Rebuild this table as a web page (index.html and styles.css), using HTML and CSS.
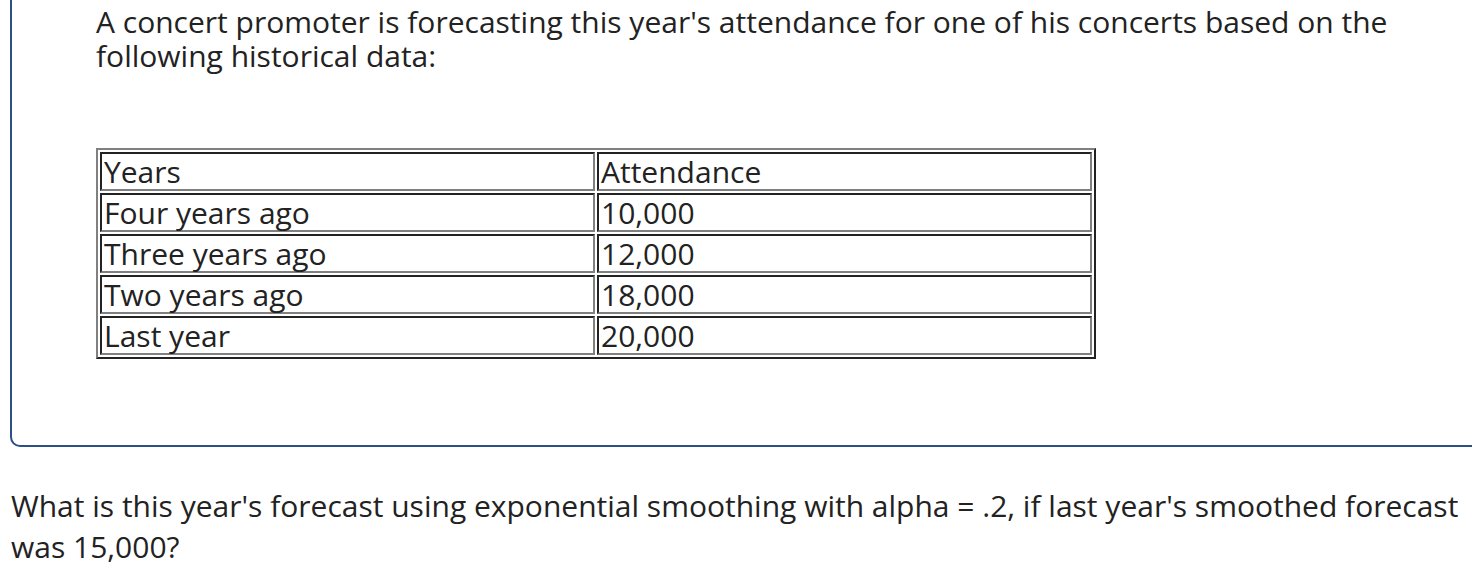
FILE: index.html
```html
<!DOCTYPE html>
<html>
<head>
<meta charset="utf-8">
<link rel="stylesheet" href="styles.css">
</head>
<body>
<div class="panel">
  <p class="intro">A concert promoter is forecasting this year's attendance for one of his concerts based on the following historical data:</p>
  <table class="data">
    <tr><td>Years</td><td>Attendance</td></tr>
    <tr><td>Four years ago</td><td>10,000</td></tr>
    <tr><td>Three years ago</td><td>12,000</td></tr>
    <tr><td>Two years ago</td><td>18,000</td></tr>
    <tr><td>Last year</td><td>20,000</td></tr>
  </table>
</div>
<p class="question">What is this year's forecast using exponential smoothing with alpha = .2, if last year's smoothed forecast was 15,000?</p>
</body>
</html>
```
FILE: styles.css
```css
html, body {
  margin: 0;
  padding: 0;
  background: #fff;
  overflow: hidden;
}
body {
  font-family: "Open Sans", "Liberation Sans", sans-serif;
  color: #222;
  font-size: 30px;
}
.panel {
  margin: -40px -12px 0 10px;
  border: 2px solid #2b5088;
  border-radius: 10px;
  padding: 43px 0 86px 84px;
}
.intro {
  margin: 0;
  line-height: 34px;
}
.data {
  margin-top: 75px;
  width: 1000px;
  border: 2px solid;
  border-color: #808080 #222 #222 #808080;
  border-spacing: 2px;
  font-size: inherit;
}
.data td {
  width: 50%;
  border: 2px solid;
  border-color: #222 #808080 #808080 #222;
  padding: 0 2px;
  height: 35px;
  line-height: 33px;
}
.question {
  margin: 0;
  padding: 38px 0 0 11px;
  line-height: 41px;
  width: 1460px;
}
```
